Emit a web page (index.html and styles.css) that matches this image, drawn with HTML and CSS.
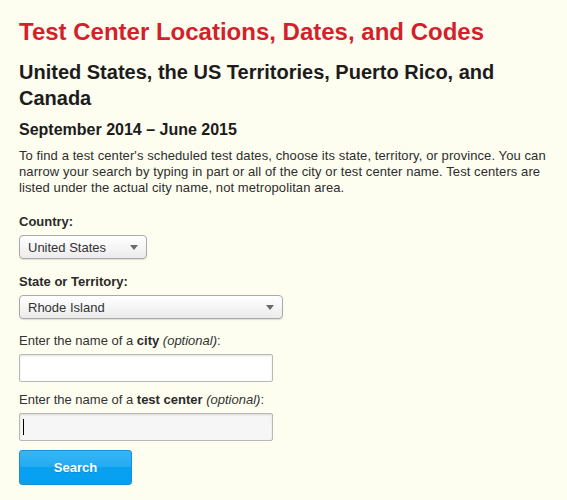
FILE: index.html
```html
<!DOCTYPE html>
<html lang="en">
<head>
<meta charset="utf-8">
<title>Test Center Locations, Dates, and Codes</title>
<link rel="stylesheet" href="styles.css">
</head>
<body>
<main class="page">
  <h1 class="title">Test Center Locations, Dates, and Codes</h1>
  <h2 class="subtitle">United States, the US Territories, Puerto Rico, and Canada</h2>
  <h3 class="dates">September 2014 – June 2015</h3>
  <p class="intro">To find a test center's scheduled test dates, choose its state, territory, or province. You can narrow your search by typing in part or all of the city or test center name. Test centers are listed under the actual city name, not metropolitan area.</p>

  <form class="search-form">
    <div class="field field-country">
      <label class="label">Country:</label>
      <div class="select select-country"><span class="select-text">United States</span><span class="arrow"></span></div>
    </div>
    <div class="field field-state">
      <label class="label">State or Territory:</label>
      <div class="select select-state"><span class="select-text">Rhode Island</span><span class="arrow"></span></div>
    </div>
    <div class="field field-city">
      <label class="label label-normal">Enter the name of a <b>city</b> <i>(optional)</i>:</label>
      <div class="input"></div>
    </div>
    <div class="field field-center">
      <label class="label label-normal">Enter the name of a <b>test center</b> <i>(optional)</i>:</label>
      <div class="input input-focus"><span class="caret"></span></div>
    </div>
    <div class="actions">
      <span class="button">Search</span>
    </div>
  </form>
</main>
</body>
</html>
```

FILE: styles.css
```css
html, body {
  margin: 0;
  padding: 0;
  background: #fdfdf0;
}
body {
  font-family: "Liberation Sans", Arial, Helvetica, sans-serif;
  color: #222;
}
.page {
  padding: 18px 19px 0 19px;
  width: 540px;
}
.title {
  margin: 0;
  font-size: 24px;
  line-height: 28px;
  font-weight: bold;
  color: #d41f2c;
}
.subtitle {
  margin: 13px 0 0 0;
  font-size: 20px;
  line-height: 26px;
  font-weight: bold;
  color: #1c1c1c;
  width: 500px;
}
.dates {
  margin: 9px 0 0 0;
  font-size: 16px;
  line-height: 20px;
  font-weight: bold;
  color: #1c1c1c;
}
.intro {
  margin: 8px 0 0 0;
  font-size: 13px;
  line-height: 16px;
  letter-spacing: 0.09px;
  color: #2e2e2e;
}
.search-form {
  margin-top: 18px;
}
.field {
  display: flex;
  flex-direction: column;
  align-items: flex-start;
}
.field-state { margin-top: 15px; }
.field-city { margin-top: 14px; }
.field-center { margin-top: 10px; }
.label {
  display: block;
  font-size: 13px;
  line-height: 16px;
  font-weight: bold;
  color: #2a2a2a;
  margin-bottom: 5px;
}
.label-normal {
  font-weight: normal;
  color: #333;
}
.label-normal b { font-weight: bold; color: #2a2a2a; }
.select {
  box-sizing: border-box;
  height: 24px;
  border: 1px solid #a9a9a9;
  border-radius: 4px;
  background: linear-gradient(#ffffff, #ececec);
  box-shadow: 0 1px 1px rgba(0,0,0,0.12);
  display: flex;
  align-items: center;
  justify-content: space-between;
  padding: 0 8px 0 8px;
  font-size: 13px;
  color: #333;
}
.select-country { width: 128px; }
.select-state { width: 264px; }
.arrow {
  width: 0;
  height: 0;
  border-left: 4px solid transparent;
  border-right: 4px solid transparent;
  border-top: 5px solid #6a6a6a;
  margin-top: 1px;
}
.input {
  position: relative;
  box-sizing: border-box;
  width: 254px;
  height: 28px;
  border: 1px solid #b8b8b8;
  border-radius: 2px;
  background: #ffffff;
  box-shadow: inset 0 1px 2px rgba(0,0,0,0.12);
}
.input-focus {
  background: #f6f6f6;
}
.caret {
  position: absolute;
  left: 3px;
  top: 5px;
  width: 1px;
  height: 16px;
  background: #000;
}
.actions {
  margin-top: 9px;
}
.button {
  box-sizing: border-box;
  display: inline-flex;
  align-items: center;
  justify-content: center;
  width: 113px;
  height: 35px;
  border: 1px solid #1490d6;
  border-radius: 3px;
  background: linear-gradient(#38b6f4 0%, #22aaf2 50%, #0aa0f0 50%, #06a0f0 100%);
  color: #fff;
  font-size: 13px;
  font-weight: bold;
  text-shadow: 0 1px 0 rgba(0,0,0,0.15);
}
```
